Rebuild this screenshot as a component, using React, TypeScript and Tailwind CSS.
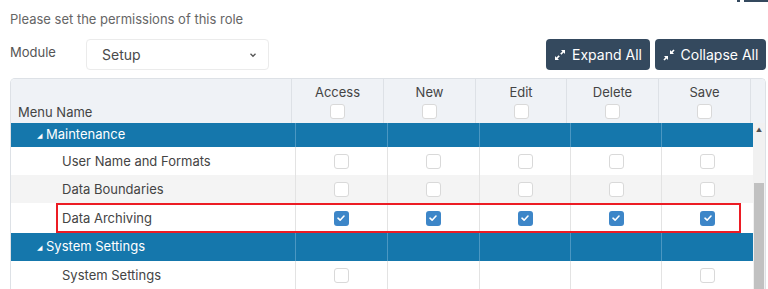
import React from 'react'

const cols = ['Access', 'New', 'Edit', 'Delete', 'Save']

const Box = ({ checked = false }: { checked?: boolean }) => {
    if (checked) {
        return (
            <span className="w-[15px] h-[15px] rounded-[3px] bg-[#3d86c8] flex items-center justify-center">
                <svg width="10" height="10" viewBox="0 0 10 10">
                    <path d="M2 5.2 L4.1 7.2 L8 3" fill="none" stroke="white" strokeWidth="1.6" strokeLinecap="round" strokeLinejoin="round" />
                </svg>
            </span>
        )
    }
    return <span className="w-[15px] h-[15px] rounded-[3px] bg-white border border-[#d9d9d9] block" />
}

const ExpandIcon = () => (
    <svg width="12" height="12" viewBox="0 0 12 12" fill="white">
        <path d="M7 1h4v4L9.6 3.6 7.4 5.8 6.2 4.6 8.4 2.4z" />
        <path d="M5 11H1V7l1.4 1.4 2.2-2.2 1.2 1.2-2.2 2.2z" />
    </svg>
)

const CollapseIcon = () => (
    <svg width="12" height="12" viewBox="0 0 12 12" fill="white">
        <path d="M11 5H7V1l1.4 1.4 2-2 1.2 1.2-2 2z" />
        <path d="M1 7h4v4L3.6 9.6l-2 2L0.4 10.4l2-2z" />
    </svg>
)

// body column widths: access..save
const bodyW = ['w-[92px]', 'w-[93px]', 'w-[91px]', 'w-[91px]', 'w-[91px]']
const headW = ['w-[92px]', 'w-[92px]', 'w-[91px]', 'w-[92px]', 'w-[92px]']

const GroupRow = ({ title, h }: { title: string, h: string }) => (
    <div className={`flex ${h} bg-[#1577ac] text-white`}>
        <div className="w-[285px] flex items-center pl-[26px] border-r border-[#4b97c2]">
            <span className="text-[7px] mr-[4px] leading-none">◢</span>
            <span className="text-[13px]">{title}</span>
        </div>
        {bodyW.map((w, i) => (
            <div key={i} className={`${w} ${i < 4 ? 'border-r border-[#4b97c2]' : ''}`} />
        ))}
    </div>
)

const ItemRow = ({ title, h, bg, checks }: { title: string, h: string, bg: string, checks: (boolean | null)[] }) => (
    <div className={`flex ${h} ${bg}`}>
        <div className="w-[285px] flex items-center pl-[51px] pt-[1px] border-r border-[#e3e3e3] text-[13px] text-[#444]">
            {title}
        </div>
        {bodyW.map((w, i) => (
            <div key={i} className={`${w} flex items-center justify-center ${i < 4 ? 'border-r border-[#e3e3e3]' : ''}`}>
                {checks[i] !== null && <Box checked={checks[i] as boolean} />}
            </div>
        ))}
    </div>
)

const App = () => {
    return (
        <div className="relative w-[768px] h-[289px] overflow-hidden bg-white" style={{ fontFamily: 'Inter, "Liberation Sans", sans-serif' }}>
            {/* cut-off bar at the top */}
            <div className="h-[2px] flex justify-end">
                <div className="w-[3px] bg-[#34495e] mr-[4px]" />
                <div className="w-[24px] bg-[#34495e]" />
            </div>

            <p className="mt-[9px] ml-[10px] text-[13px] leading-[16px] text-[#666]">Please set the permissions of this role</p>

            <div className="mt-[12px] flex items-center h-[31px]">
                <span className="ml-[10px] w-[76px] text-[13px] text-[#555] -mt-[4px]">Module</span>
                <div className="w-[183px] h-[31px] border border-[#ebebeb] rounded-[4px] flex items-center justify-between pl-[15px] pr-[10px] text-[14px] text-[#4a4a4a]">
                    <span>Setup</span>
                    <svg width="10" height="10" viewBox="0 0 10 10">
                        <path d="M2.5 3.8 L5 6.3 L7.5 3.8" fill="none" stroke="#555" strokeWidth="1.3" />
                    </svg>
                </div>
                <div className="ml-auto mr-[2px] flex gap-[5px]">
                    <button className="h-[31px] w-[104px] rounded-[4px] bg-[#34495e] text-white text-[14px] flex items-center justify-center gap-[6px]">
                        <ExpandIcon /> Expand All
                    </button>
                    <button className="h-[31px] w-[111px] rounded-[4px] bg-[#34495e] text-white text-[14px] flex items-center justify-center gap-[6px]">
                        <CollapseIcon /> Collapse All
                    </button>
                </div>
            </div>

            {/* table */}
            <div className="mt-[8px] ml-[10px] w-[756px] border border-b-0 border-[#dde1e6] rounded-t-[5px] overflow-hidden">
                <div className="flex h-[44px] bg-[#eff2f6] text-[13px] text-[#444]">
                    <div className="w-[281px] border-r border-[#dde1e6] flex items-end pl-[7px] pb-[1px]">Menu Name</div>
                    {cols.map((c, i) => (
                        <div key={c} className={`${headW[i]} border-r border-[#dde1e6] flex flex-col items-center pt-[5px] gap-[4px]`}>
                            <span className="leading-[16px]">{c}</span>
                            <Box />
                        </div>
                    ))}
                    <div className="flex-1" />
                </div>

                <div className="flex">
                    <div className="w-[742px]">
                        <GroupRow title="Maintenance" h="h-[24px]" />
                        <ItemRow title="User Name and Formats" h="h-[28px]" bg="bg-white" checks={[false, false, false, false, false]} />
                        <ItemRow title="Data Boundaries" h="h-[28px]" bg="bg-[#f4f4f4]" checks={[false, false, false, false, false]} />
                        <ItemRow title="Data Archiving" h="h-[30px]" bg="bg-white" checks={[true, true, true, true, true]} />
                        <GroupRow title="System Settings" h="h-[28px]" />
                        <ItemRow title="System Settings" h="h-[28px]" bg="bg-white" checks={[false, null, null, null, false]} />
                    </div>
                    {/* scrollbar */}
                    <div className="w-[13px] bg-[#f1f1f1] flex flex-col items-center">
                        <span className="mt-[4px] text-[6px] leading-none text-[#505050]">▲</span>
                        <div className="mt-[50px] w-[10px] h-[120px] bg-[#c1c1c1]" />
                    </div>
                </div>
            </div>

            {/* highlight annotation */}
            <div className="absolute left-[56px] top-[203px] w-[685px] h-[30px] border-2 border-[#ec1c24]" />
        </div>
    )
}

export default App
